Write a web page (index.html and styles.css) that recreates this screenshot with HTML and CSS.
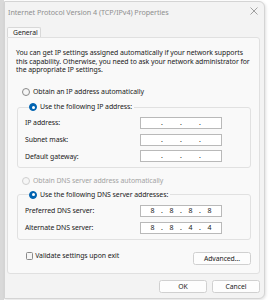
FILE: index.html
```html
<!DOCTYPE html>
<html>
<head>
<meta charset="utf-8">
<link rel="stylesheet" href="styles.css">
</head>
<body>
<div class="screen">
  <div class="backdrop"></div>
  <div class="window">
    <div class="titlebar">
      <span class="title">Internet Protocol Version 4 (TCP/IPv4) Properties</span>
      <svg class="close" width="8" height="8" viewBox="0 0 8 8"><path d="M0.5 0.5 L7.5 7.5 M7.5 0.5 L0.5 7.5" stroke="#8a8a8a" stroke-width="0.8" fill="none"/></svg>
    </div>
    <div class="tabs"><div class="tab">General</div></div>
    <div class="panel">
      <p class="intro">You can get IP settings assigned automatically if your network supports this capability. Otherwise, you need to ask your network administrator for the appropriate IP settings.</p>
      <div class="radio first"><span class="rb"></span>Obtain an IP address automatically</div>
      <fieldset class="group">
        <legend><span class="radio"><span class="rb on"></span>Use the following IP address:</span></legend>
        <div class="row"><span class="lbl">IP address:</span><div class="ip"><span class="seg"></span><span class="dot">.</span><span class="seg"></span><span class="dot">.</span><span class="seg"></span><span class="dot">.</span><span class="seg"></span></div></div>
        <div class="row"><span class="lbl">Subnet mask:</span><div class="ip"><span class="seg"></span><span class="dot">.</span><span class="seg"></span><span class="dot">.</span><span class="seg"></span><span class="dot">.</span><span class="seg"></span></div></div>
        <div class="row"><span class="lbl">Default gateway:</span><div class="ip"><span class="seg"></span><span class="dot">.</span><span class="seg"></span><span class="dot">.</span><span class="seg"></span><span class="dot">.</span><span class="seg"></span></div></div>
      </fieldset>
      <div class="radio disabled dnsauto"><span class="rb"></span>Obtain DNS server address automatically</div>
      <fieldset class="group dns">
        <legend><span class="radio"><span class="rb on"></span>Use the following DNS server addresses:</span></legend>
        <div class="row"><span class="lbl">Preferred DNS server:</span><div class="ip"><span class="seg">8</span><span class="dot">.</span><span class="seg">8</span><span class="dot">.</span><span class="seg">8</span><span class="dot">.</span><span class="seg">8</span></div></div>
        <div class="row"><span class="lbl">Alternate DNS server:</span><div class="ip"><span class="seg">8</span><span class="dot">.</span><span class="seg">8</span><span class="dot">.</span><span class="seg">4</span><span class="dot">.</span><span class="seg">4</span></div></div>
      </fieldset>
      <div class="bottomrow">
        <div class="check"><span class="cb"></span>Validate settings upon exit</div>
        <div class="btn adv">Advanced...</div>
      </div>
    </div>
    <div class="footer">
      <div class="btn">OK</div>
      <div class="btn">Cancel</div>
    </div>
  </div>
</div>
</body>
</html>
```
FILE: styles.css
```css
html, body {
  margin: 0;
  padding: 0;
  background: #ffffff;
}
body {
  font-family: "Noto Sans", "Open Sans", sans-serif;
  font-size: 6.9px;
  letter-spacing: -0.06px;
  color: #1a1a1a;
}
.screen {
  display: flex;
  width: 275px;
  height: 300px;
  overflow: hidden;
}
.backdrop {
  width: 4px;
  height: 300px;
  background: #d9d9d9;
  flex: none;
}
.window {
  flex: none;
  width: 259px;
  margin-top: 1px;
  align-self: flex-start;
  background: #f3f3f3;
  border: 1px solid #d4d4d4;
  border-radius: 0 6px 6px 0;
  box-shadow: 1px 1px 3px rgba(0,0,0,0.12);
}
.titlebar {
  height: 19px;
  display: flex;
  align-items: center;
  justify-content: space-between;
  padding: 0 6px 0 3px;
}
.title {
  color: #8f8f8f;
  font-size: 7.2px;
}
.close {
  display: block;
  margin-top: -2px;
}
.tabs {
  padding: 6px 0 0 2px;
  display: flex;
}
.tab {
  height: 10px;
  width: 34px;
  box-sizing: border-box;
  padding-left: 5px;
  line-height: 10px;
  background: #f9f9f9;
  border: 1px solid #d8d8d8;
  border-bottom: none;
  border-radius: 2px 2px 0 0;
  font-size: 6.8px;
  color: #1a1a1a;
}
.panel {
  margin: 0 4px 0 2px;
  height: 237px;
  box-sizing: border-box;
  background: #f9f9f9;
  border: 1px solid #e0e0e0;
  border-radius: 0 3px 3px 3px;
  padding: 0 7px 0 8px;
}
.intro {
  margin: 11px 0 0 0;
  line-height: 8.7px;
  width: 234px;
}
.radio {
  display: flex;
  align-items: center;
  height: 10px;
  line-height: 10px;
  white-space: nowrap;
}
.radio.first {
  margin: 12px 0 0 6px;
}
.rb {
  width: 8px;
  height: 8px;
  box-sizing: border-box;
  border-radius: 50%;
  border: 1px solid #8a8a8a;
  background: #f6f6f6;
  margin-right: 3px;
  flex: none;
  display: flex;
  align-items: center;
  justify-content: center;
}
.rb.on {
  background: #0063b1;
  border-color: #0063b1;
}
.rb.on::after {
  content: "";
  width: 3px;
  height: 3px;
  border-radius: 50%;
  background: #ffffff;
}
.disabled {
  color: #a3a3a3;
}
.disabled .rb {
  border-color: #cfcfcf;
}
.group {
  margin: 5px 0 0 1px;
  padding: 0 0 5px 7px;
  width: 234px;
  box-sizing: border-box;
  border: 1px solid #e1e1e1;
  border-radius: 3px;
}
.group legend {
  padding: 0 2px 0 0;
  margin-left: 4px;
}
.row {
  display: flex;
  align-items: center;
  height: 12px;
  margin-top: 4.7px;
}
.group .row:first-of-type {
  margin-top: 4.8px;
}
.dns .row {
  margin-top: 5px;
}
.lbl {
  width: 115px;
  flex: none;
}
.ip {
  width: 82px;
  height: 12px;
  box-sizing: border-box;
  border: 1px solid #b9b9b9;
  background: #ffffff;
  display: flex;
  align-items: center;
  padding-left: 3px;
  font-size: 7px;
  line-height: 10px;
}
.seg {
  width: 17px;
  text-align: center;
}
.dot {
  width: 2px;
  text-align: center;
}
.dnsauto {
  margin: 8px 0 0 6px;
}
.group.dns {
  margin-top: 3.6px;
}
.bottomrow {
  display: flex;
  justify-content: space-between;
  align-items: flex-start;
  margin: 12.4px 0 0 9.7px;
  width: 225.3px;
}
.check {
  display: flex;
  align-items: center;
  height: 7.5px;
  line-height: 10px;
}
.cb {
  width: 7.5px;
  height: 7.5px;
  box-sizing: border-box;
  border: 1px solid #8a8a8a;
  border-radius: 1.5px;
  background: #f6f6f6;
  margin-right: 2px;
  flex: none;
}
.btn {
  height: 12.6px;
  box-sizing: border-box;
  border: 1px solid #d0d0d0;
  border-radius: 2.5px;
  background: #fdfdfd;
  text-align: center;
  line-height: 11px;
  font-size: 6.8px;
}
.adv {
  width: 58px;
}
.footer {
  display: flex;
  justify-content: flex-end;
  gap: 5px;
  padding: 6px 4px 5px 0;
}
.footer .btn {
  width: 48px;
}
```
